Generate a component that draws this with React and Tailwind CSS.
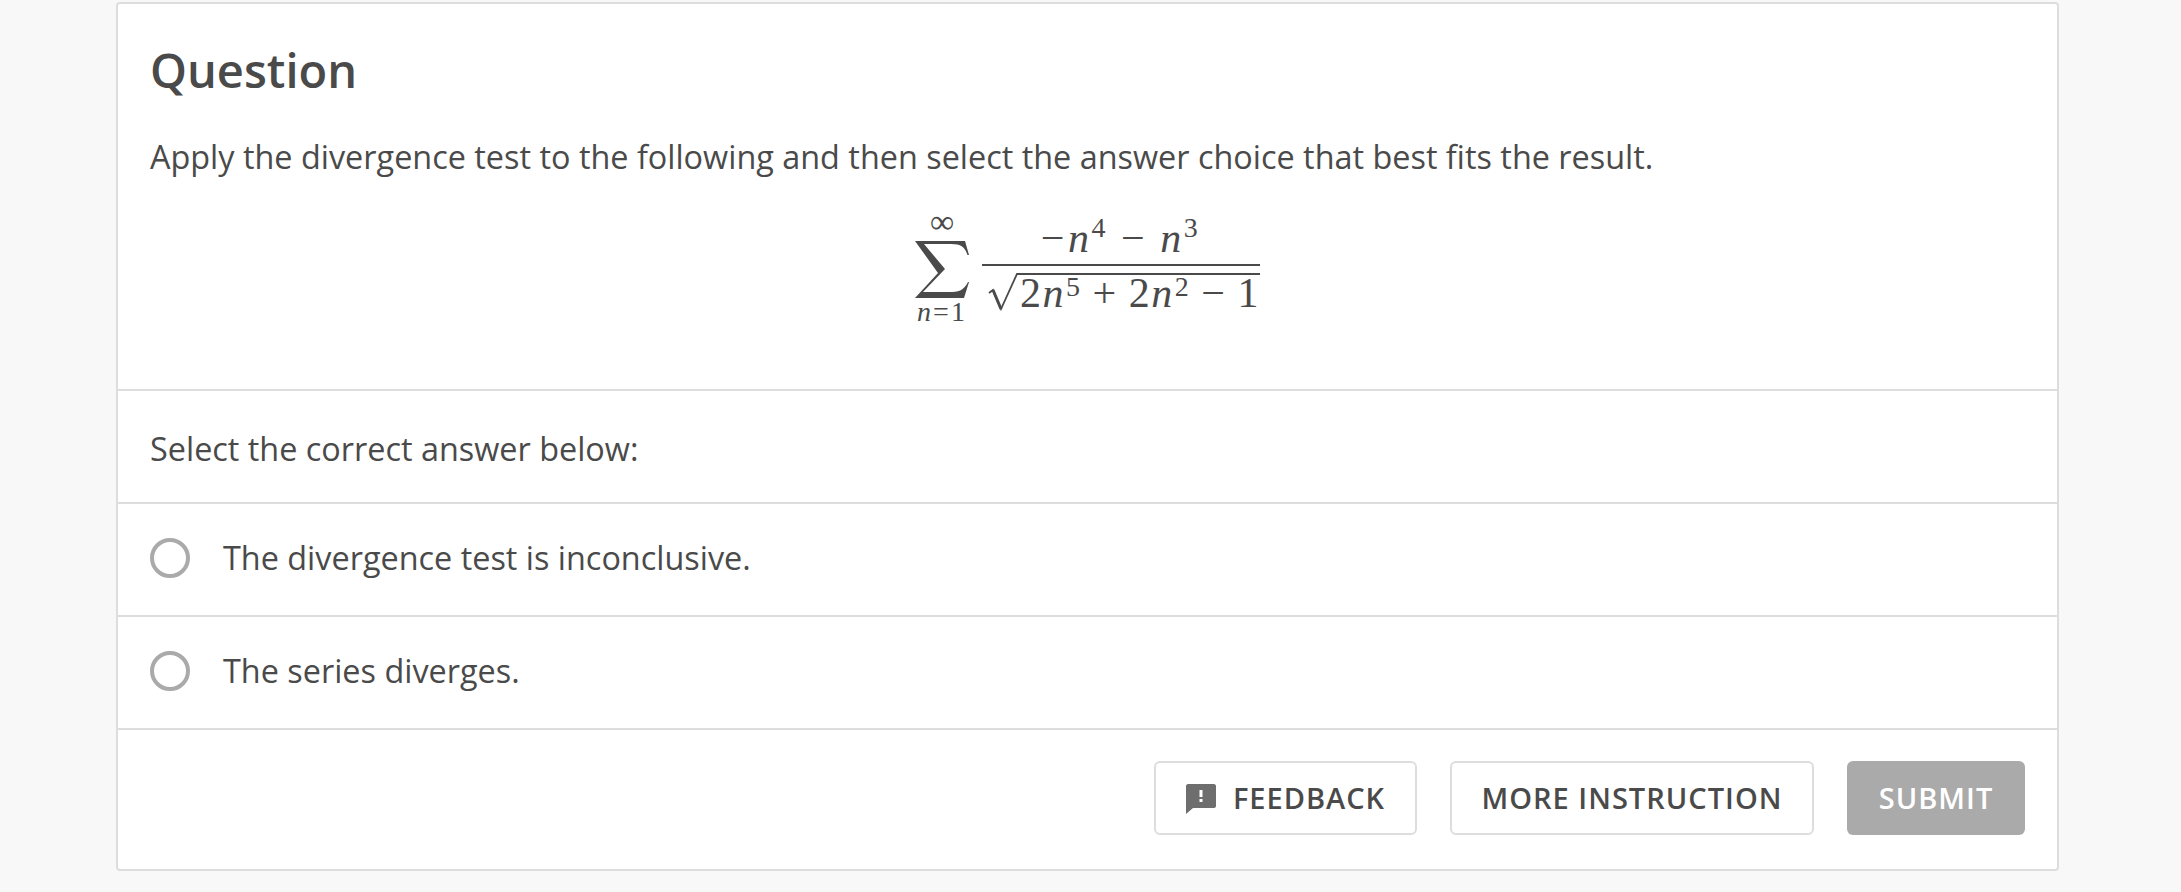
import React from 'react';

const Radio = () => (
    <span className="block w-10 h-10 rounded-full border-4 border-[#aaaaaa] shrink-0" />
);

const SupHigh = ({ children }) => (
    <sup className="text-[28px] not-italic leading-none relative -top-[15px] align-baseline ml-[1px]">{children}</sup>
);

const SupLow = ({ children }) => (
    <sup className="text-[28px] not-italic leading-none relative -top-[11px] align-baseline ml-[1px]">{children}</sup>
);

const Formula = () => (
    <div className="flex items-start justify-center text-[#4a4a4a] font-['Liberation_Serif',serif] h-[112px] pt-[2px]">
        <div className="flex flex-col items-center w-[54px] mr-[13px]">
            <span className="text-[34px] leading-[24px] h-[31px] -mt-[3px]">∞</span>
            <svg width="54" height="57" viewBox="0 0 54 57" className="block">
                <path d="M0 0H50L54 14H52.5C50 6 46 3 36 3H9L30 28L8 51H37C46 51 50 47 53 41H54L49 57H0L23 32Z" fill="#4a4a4a" />
            </svg>
            <span className="text-[28px] leading-[26px] tracking-[2px] mt-[1px] whitespace-nowrap"><i>n</i>=1</span>
        </div>
        <div className="flex flex-col w-[278px]">
            <div className="h-[51px] text-center text-[42px] leading-[50px] tracking-[1.5px] whitespace-nowrap italic pr-[2px]">
                <span className="not-italic mr-[2px]">−</span>n<SupHigh>4</SupHigh><span className="not-italic mx-[14px]">−</span>n<SupHigh>3</SupHigh>
            </div>
            <div className="h-[2px] bg-[#4a4a4a]" />
            <div className="flex pl-[6px] mt-[7px]">
                <svg width="32" height="40" viewBox="0 0 32 40" className="block shrink-0">
                    <path d="M1 20L5 17L13 36L29 1H32" fill="none" stroke="#4a4a4a" strokeWidth="1.8" />
                    <path d="M5 17L13 36" fill="none" stroke="#4a4a4a" strokeWidth="3" />
                </svg>
                <div className="border-t-2 border-[#4a4a4a] flex-1 text-[42px] leading-[36px] tracking-[1.5px] whitespace-nowrap italic">
                    <span className="not-italic">2</span>n<SupLow>5</SupLow><span className="not-italic mx-[11px]">+</span><span className="not-italic">2</span>n<SupLow>2</SupLow><span className="not-italic mx-[11px]">−</span><span className="not-italic">1</span>
                </div>
            </div>
        </div>
    </div>
);

const App = () => {
    const answers = ['The divergence test is inconclusive.', 'The series diverges.'];

    return (
        <div className="h-[892px] overflow-hidden bg-[#f8f8f8] pt-[2px] px-[116px] font-['Open_Sans',sans-serif] text-[#4a4a4a]">
            <div className="w-[1943px] h-[869px] bg-white border-2 border-[#dddddd] rounded-[4px]">
                <div className="h-[387px] border-b-2 border-[#dddddd] px-[32px] pt-[36px]">
                    <h1 className="text-[47px] leading-[60px] font-semibold">Question</h1>
                    <p className="text-[32.4px] leading-[40px] mt-[36px]">Apply the divergence test to the following and then select the answer choice that best fits the result.</p>
                    <div className="mt-[35px]">
                        <Formula />
                    </div>
                </div>
                <div className="h-[113px] border-b-2 border-[#dddddd] px-[32px] pt-[3px] flex items-center">
                    <p className="text-[32.4px]">Select the correct answer below:</p>
                </div>
                {answers.map((answer, index) => (
                    <div key={index} className="h-[113px] border-b-2 border-[#dddddd] px-[32px] pb-[4px] flex items-center gap-[33px]">
                        <Radio />
                        <p className="text-[32.4px]">{answer}</p>
                    </div>
                ))}
                <div className="flex items-start justify-end gap-[33px] px-[32px] pt-[31px]">
                    <button className="h-[74px] w-[263px] flex items-center justify-center gap-[17px] border-2 border-[#dddddd] rounded-[6px] text-[29px] font-semibold tracking-[1px]">
                        <svg width="30" height="30" viewBox="0 0 30 30" className="block mt-[2px]">
                            <path d="M2 0H28C29 0 30 1 30 2V22C30 23 29 24 28 24H7L0 30V2C0 1 1 0 2 0Z" fill="#6e6e6e" />
                            <rect x="13.5" y="6" width="3" height="7" fill="#ffffff" />
                            <rect x="13.5" y="15" width="3" height="3" fill="#ffffff" />
                        </svg>
                        FEEDBACK
                    </button>
                    <button className="h-[74px] w-[364px] border-2 border-[#dddddd] rounded-[6px] text-[29px] font-semibold tracking-[1px]">MORE INSTRUCTION</button>
                    <button className="h-[74px] w-[178px] bg-[#aaaaaa] text-white rounded-[6px] text-[29px] font-semibold tracking-[1px]">SUBMIT</button>
                </div>
            </div>
        </div>
    );
};

export default App;
